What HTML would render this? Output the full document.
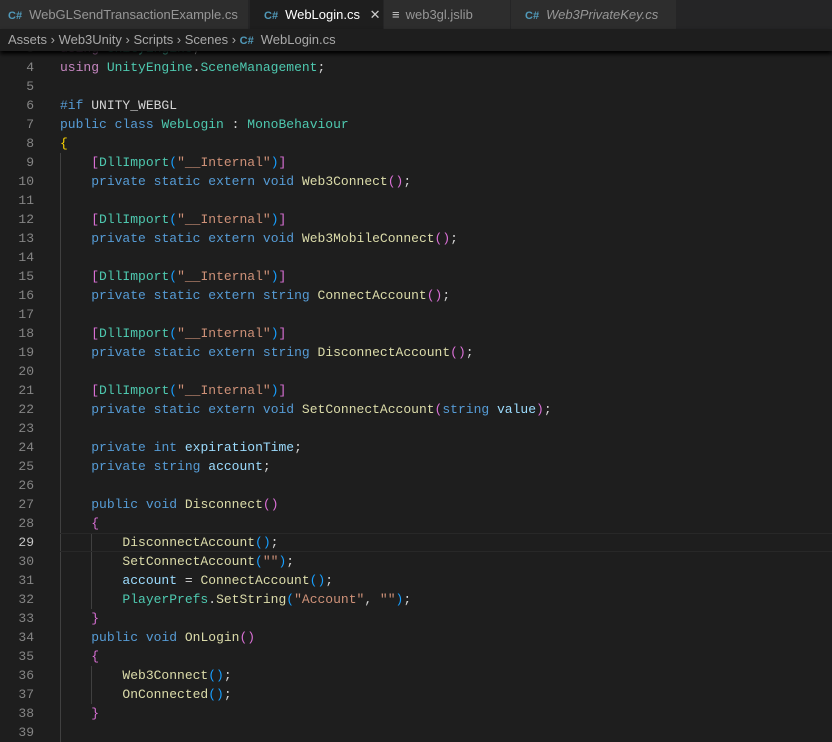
<!DOCTYPE html>
<html><head><meta charset="utf-8"><style>
*{margin:0;padding:0;box-sizing:border-box}
body{width:832px;height:733px;overflow:hidden;background:#1e1e1e;font-family:"Liberation Sans",sans-serif;position:relative}
.tabs{position:absolute;left:0;top:0;width:832px;height:29px;background:#252526;z-index:3}
.tab{position:absolute;top:0;height:29px;background:#2d2d2d;color:#969696;font-size:13px;line-height:29px;padding-left:8px;white-space:nowrap}
.tab.act{background:#1e1e1e;color:#fff}
.ci{color:#519aba;font-weight:bold;font-size:11px;margin-right:7px}
.crumb{position:absolute;left:0;top:29px;width:832px;height:22px;background:#1e1e1e;color:#a9a9a9;font-size:13px;line-height:22px;padding-left:8px;z-index:3;box-shadow:0 3px 4px #000}
.code{position:absolute;left:0;top:38.5px;width:832px;font-family:"Liberation Mono",monospace;font-size:13px;z-index:1}
.l{height:19px;line-height:19px;position:relative;white-space:pre;color:#d4d4d4}
.n{position:absolute;left:0;width:34px;text-align:right;color:#858585}
.t{position:absolute;left:60px}
.cur::after{content:"";position:absolute;left:60px;right:0;top:0;height:19px;box-shadow:inset 0 1px 0 #282828,inset 0 -1px 0 #282828}
.cur .n{color:#c6c6c6}
.g{position:absolute;top:0;width:1px;height:19px;background:#404040}
.k{color:#569cd6}.ty{color:#4ec9b0}.f{color:#dcdcaa}.v{color:#9cdcfe}.s{color:#ce9178}.y{color:#ffd700}.p{color:#da70d6}.b{color:#179fff}.pk{color:#c586c0}
</style></head><body>
<div class="tabs">
<div class="tab" style="left:0;width:248px"><span class="ci">C#</span>WebGLSendTransactionExample.cs</div>
<div class="tab act" style="left:250px;width:133px;padding-left:14px"><span class="ci">C#</span>WebLogin.cs <span style="margin-left:6px;color:#ccc">✕</span></div>
<div class="tab" style="left:384px;width:126px"><span style="color:#ccc;margin-right:6px">≡</span>web3gl.jslib</div>
<div class="tab" style="left:511px;width:165px;font-style:italic;padding-left:14px"><span class="ci" style="font-style:normal">C#</span>Web3PrivateKey.cs</div>
</div>
<div class="crumb">Assets › Web3Unity › Scripts › Scenes › <span class="ci">C#</span>WebLogin.cs</div>
<div class="code">
<div class="l"><span class="n">3</span><span class="t"><span class="pk">using</span> <span class="ty">UnityEngine</span>;</span></div>
<div class="l"><span class="n">4</span><span class="t"><span class="pk">using</span> <span class="ty">UnityEngine</span>.<span class="ty">SceneManagement</span>;</span></div>
<div class="l"><span class="n">5</span></div>
<div class="l"><span class="n">6</span><span class="t"><span class="k">#if</span> <span style="color:#d4d4d4">UNITY_WEBGL</span></span></div>
<div class="l"><span class="n">7</span><span class="t"><span class="k">public</span> <span class="k">class</span> <span class="ty">WebLogin</span> : <span class="ty">MonoBehaviour</span></span></div>
<div class="l"><span class="n">8</span><span class="t"><span class="y">{</span></span></div>
<div class="l"><span class="n">9</span><span class="g" style="left:60px"></span><span class="t">    <span class="p">[</span><span class="ty">DllImport</span><span class="b">(</span><span class="s">"__Internal"</span><span class="b">)</span><span class="p">]</span></span></div>
<div class="l"><span class="n">10</span><span class="g" style="left:60px"></span><span class="t">    <span class="k">private</span> <span class="k">static</span> <span class="k">extern</span> <span class="k">void</span> <span class="f">Web3Connect</span><span class="p">()</span>;</span></div>
<div class="l"><span class="n">11</span><span class="g" style="left:60px"></span></div>
<div class="l"><span class="n">12</span><span class="g" style="left:60px"></span><span class="t">    <span class="p">[</span><span class="ty">DllImport</span><span class="b">(</span><span class="s">"__Internal"</span><span class="b">)</span><span class="p">]</span></span></div>
<div class="l"><span class="n">13</span><span class="g" style="left:60px"></span><span class="t">    <span class="k">private</span> <span class="k">static</span> <span class="k">extern</span> <span class="k">void</span> <span class="f">Web3MobileConnect</span><span class="p">()</span>;</span></div>
<div class="l"><span class="n">14</span><span class="g" style="left:60px"></span></div>
<div class="l"><span class="n">15</span><span class="g" style="left:60px"></span><span class="t">    <span class="p">[</span><span class="ty">DllImport</span><span class="b">(</span><span class="s">"__Internal"</span><span class="b">)</span><span class="p">]</span></span></div>
<div class="l"><span class="n">16</span><span class="g" style="left:60px"></span><span class="t">    <span class="k">private</span> <span class="k">static</span> <span class="k">extern</span> <span class="k">string</span> <span class="f">ConnectAccount</span><span class="p">()</span>;</span></div>
<div class="l"><span class="n">17</span><span class="g" style="left:60px"></span></div>
<div class="l"><span class="n">18</span><span class="g" style="left:60px"></span><span class="t">    <span class="p">[</span><span class="ty">DllImport</span><span class="b">(</span><span class="s">"__Internal"</span><span class="b">)</span><span class="p">]</span></span></div>
<div class="l"><span class="n">19</span><span class="g" style="left:60px"></span><span class="t">    <span class="k">private</span> <span class="k">static</span> <span class="k">extern</span> <span class="k">string</span> <span class="f">DisconnectAccount</span><span class="p">()</span>;</span></div>
<div class="l"><span class="n">20</span><span class="g" style="left:60px"></span></div>
<div class="l"><span class="n">21</span><span class="g" style="left:60px"></span><span class="t">    <span class="p">[</span><span class="ty">DllImport</span><span class="b">(</span><span class="s">"__Internal"</span><span class="b">)</span><span class="p">]</span></span></div>
<div class="l"><span class="n">22</span><span class="g" style="left:60px"></span><span class="t">    <span class="k">private</span> <span class="k">static</span> <span class="k">extern</span> <span class="k">void</span> <span class="f">SetConnectAccount</span><span class="p">(</span><span class="k">string</span> <span class="v">value</span><span class="p">)</span>;</span></div>
<div class="l"><span class="n">23</span><span class="g" style="left:60px"></span></div>
<div class="l"><span class="n">24</span><span class="g" style="left:60px"></span><span class="t">    <span class="k">private</span> <span class="k">int</span> <span class="v">expirationTime</span>;</span></div>
<div class="l"><span class="n">25</span><span class="g" style="left:60px"></span><span class="t">    <span class="k">private</span> <span class="k">string</span> <span class="v">account</span>;</span></div>
<div class="l"><span class="n">26</span><span class="g" style="left:60px"></span></div>
<div class="l"><span class="n">27</span><span class="g" style="left:60px"></span><span class="t">    <span class="k">public</span> <span class="k">void</span> <span class="f">Disconnect</span><span class="p">()</span></span></div>
<div class="l"><span class="n">28</span><span class="g" style="left:60px"></span><span class="t">    <span class="p">{</span></span></div>
<div class="l cur"><span class="n">29</span><span class="g" style="left:60px"></span><span class="g" style="left:91px"></span><span class="t">        <span class="f">DisconnectAccount</span><span class="b">()</span>;</span></div>
<div class="l"><span class="n">30</span><span class="g" style="left:60px"></span><span class="g" style="left:91px"></span><span class="t">        <span class="f">SetConnectAccount</span><span class="b">(</span><span class="s">""</span><span class="b">)</span>;</span></div>
<div class="l"><span class="n">31</span><span class="g" style="left:60px"></span><span class="g" style="left:91px"></span><span class="t">        <span class="v">account</span> = <span class="f">ConnectAccount</span><span class="b">()</span>;</span></div>
<div class="l"><span class="n">32</span><span class="g" style="left:60px"></span><span class="g" style="left:91px"></span><span class="t">        <span class="ty">PlayerPrefs</span>.<span class="f">SetString</span><span class="b">(</span><span class="s">"Account"</span>, <span class="s">""</span><span class="b">)</span>;</span></div>
<div class="l"><span class="n">33</span><span class="g" style="left:60px"></span><span class="t">    <span class="p">}</span></span></div>
<div class="l"><span class="n">34</span><span class="g" style="left:60px"></span><span class="t">    <span class="k">public</span> <span class="k">void</span> <span class="f">OnLogin</span><span class="p">()</span></span></div>
<div class="l"><span class="n">35</span><span class="g" style="left:60px"></span><span class="t">    <span class="p">{</span></span></div>
<div class="l"><span class="n">36</span><span class="g" style="left:60px"></span><span class="g" style="left:91px"></span><span class="t">        <span class="f">Web3Connect</span><span class="b">()</span>;</span></div>
<div class="l"><span class="n">37</span><span class="g" style="left:60px"></span><span class="g" style="left:91px"></span><span class="t">        <span class="f">OnConnected</span><span class="b">()</span>;</span></div>
<div class="l"><span class="n">38</span><span class="g" style="left:60px"></span><span class="t">    <span class="p">}</span></span></div>
<div class="l"><span class="n">39</span><span class="g" style="left:60px"></span></div>
</div>
</body></html>
